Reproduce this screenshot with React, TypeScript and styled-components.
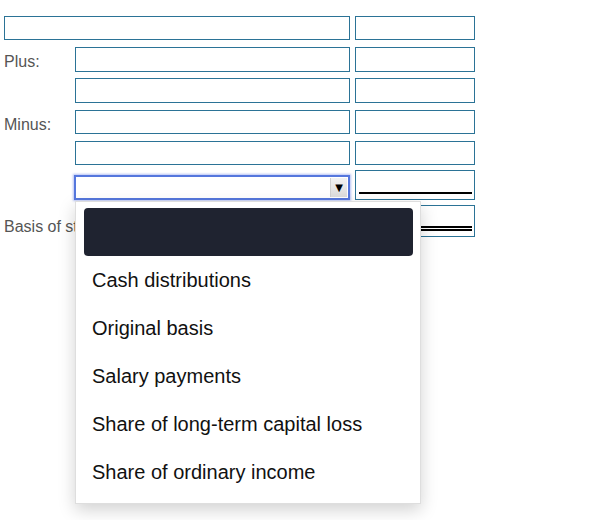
import React from "react";
import styled, { createGlobalStyle } from "styled-components";

const Global = createGlobalStyle`
  html, body { margin: 0; padding: 0; background: #fff; }
  body { font-family: "Liberation Sans", Arial, sans-serif; }
`;

const Page = styled.div`
  position: relative;
  padding: 16px 0 0 4px;
  width: 598px;
  height: 520px;
  box-sizing: border-box;
  overflow: hidden;
`;

const Form = styled.div`
  display: flex;
  flex-direction: column;
`;

const Row = styled.div<{ $mt?: number; $h: number }>`
  display: grid;
  grid-template-columns: 66px 275px 120px;
  column-gap: 5px;
  margin-top: ${(p) => p.$mt ?? 0}px;
  height: ${(p) => p.$h}px;
  align-items: start;
`;

const Label = styled.div<{ $pt?: number }>`
  font-size: 16px;
  color: #555;
  line-height: 20px;
  padding-top: ${(p) => p.$pt ?? 5}px;
  white-space: nowrap;
`;

const Box = styled.div<{ $span?: boolean; $h?: number }>`
  grid-column: ${(p) => (p.$span ? "1 / span 2" : "auto")};
  height: ${(p) => p.$h ?? 24}px;
  border: 1px solid #2b7396;
  box-sizing: border-box;
  background: #fff;
`;

const TotalBox = styled(Box)`
  display: flex;
  align-items: flex-end;
  padding: 0 2px 5px 3px;
`;

const Rule = styled.div<{ $double?: boolean }>`
  flex: 1;
  border-bottom: ${(p) => (p.$double ? "5px double #000" : "2px solid #000")};
`;

const SelectWrap = styled.div`
  position: relative;
  margin-top: 5px;
  height: 25px;
`;

const SelectBox = styled.div`
  height: 25px;
  margin-left: -1px;
  box-sizing: border-box;
  border: 2px solid #5577dd;
  box-shadow: 0 0 2px 1px rgba(90, 120, 230, 0.45);
  background: #fff;
  display: flex;
  justify-content: flex-end;
  align-items: stretch;
  padding: 1px;
`;

const ArrowBtn = styled.div`
  width: 16px;
  background: linear-gradient(#f2f2f2, #dcdcdc);
  border-left: 1px solid #d0d0d0;
  display: flex;
  align-items: center;
  justify-content: center;
  font-size: 10px;
  color: #000;
  font-family: "DejaVu Sans", sans-serif;
`;

const Menu = styled.div`
  position: absolute;
  left: 0;
  top: 26px;
  width: 346px;
  box-sizing: border-box;
  background: #fff;
  border: 1px solid #dedede;
  box-shadow: 0 6px 16px rgba(0, 0, 0, 0.18);
  padding: 6px 7px 7px 8px;
  z-index: 10;
`;

const Option = styled.div<{ $selected?: boolean }>`
  height: 48px;
  display: flex;
  align-items: center;
  padding-left: 8px;
  font-size: 20px;
  color: #111;
  border-radius: 4px;
  background: ${(p) => (p.$selected ? "#1f2330" : "transparent")};
`;

const options = [
  "",
  "Cash distributions",
  "Original basis",
  "Salary payments",
  "Share of long-term capital loss",
  "Share of ordinary income",
];

export default function App() {
  return (
    <Page>
      <Global />
      <Form>
        <Row $h={24}>
          <Box $span />
          <Box />
        </Row>
        <Row $mt={7} $h={25}>
          <Label>Plus:</Label>
          <Box $h={25} />
          <Box $h={25} />
        </Row>
        <Row $mt={6} $h={25}>
          <div />
          <Box $h={25} />
          <Box $h={25} />
        </Row>
        <Row $mt={7} $h={24}>
          <Label>Minus:</Label>
          <Box />
          <Box />
        </Row>
        <Row $mt={7} $h={24}>
          <div />
          <Box />
          <Box />
        </Row>
        <Row $mt={5} $h={30}>
          <div />
          <SelectWrap>
            <SelectBox>
              <ArrowBtn>▼</ArrowBtn>
            </SelectBox>
            <Menu>
              {options.map((o, i) => (
                <Option key={i} $selected={i === 0}>
                  {o}
                </Option>
              ))}
            </Menu>
          </SelectWrap>
          <TotalBox $h={30}>
            <Rule />
          </TotalBox>
        </Row>
        <Row $mt={5} $h={32}>
          <Label $pt={12}>Basis of stock:</Label>
          <div />
          <TotalBox $h={32}>
            <Rule $double />
          </TotalBox>
        </Row>
      </Form>
    </Page>
  );
}
